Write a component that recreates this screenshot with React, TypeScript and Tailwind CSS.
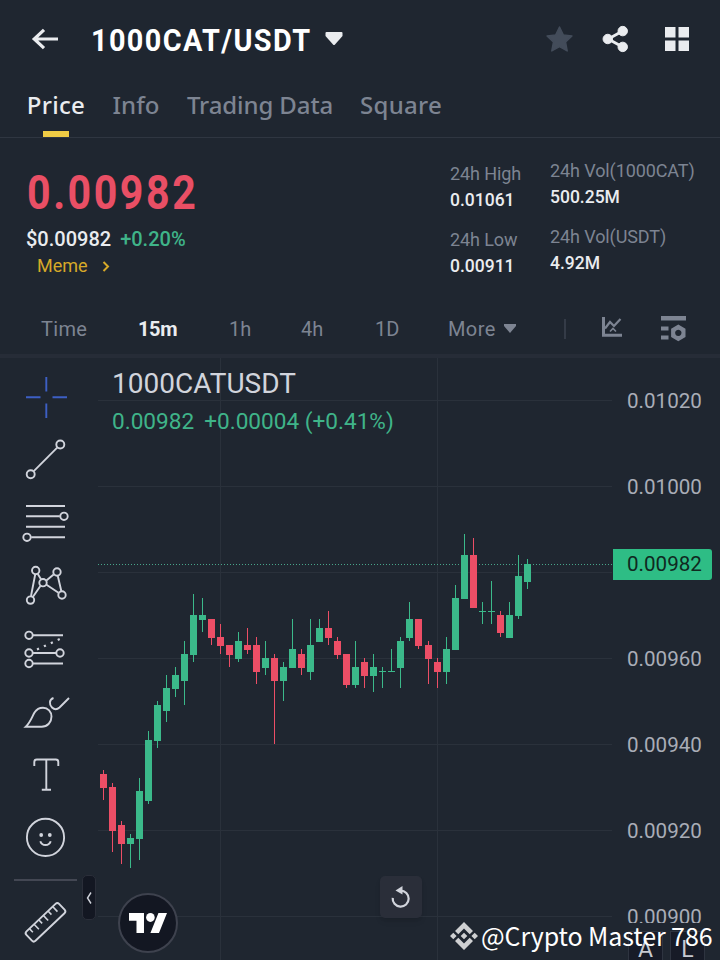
import React from "react";

type Candle = {
  up: boolean;
  high: number;
  top: number;
  bottom: number;
  low: number;
};

const c = (
  dir: "G" | "R",
  high: number,
  top: number,
  bottom: number,
  low: number
): Candle => ({ up: dir === "G", high, top, bottom, low });

// values are pane pixels + 358 (the pane's offset in the screen)
const PANE_TOP = 358;

const candles: Candle[] = [
  c("R", 770, 774, 788, 800),
  c("R", 783, 787, 831, 852),
  c("R", 821, 825, 844, 864),
  c("G", 834, 838, 844, 868),
  c("G", 778, 791, 839, 860),
  c("G", 731, 740, 801, 804),
  c("G", 701, 705, 741, 748),
  c("G", 675, 688, 711, 722),
  c("G", 667, 675, 689, 697),
  c("G", 641, 654, 681, 705),
  c("G", 594, 615, 655, 662),
  c("G", 598, 615, 620, 632),
  c("R", 619, 619, 638, 645),
  c("R", 624, 637, 646, 654),
  c("R", 645, 645, 655, 667),
  c("G", 632, 641, 659, 662),
  c("R", 628, 645, 650, 654),
  c("R", 637, 645, 672, 684),
  c("G", 641, 658, 668, 675),
  c("R", 654, 658, 681, 744),
  c("G", 662, 667, 681, 701),
  c("G", 619, 649, 668, 668),
  c("R", 649, 654, 668, 675),
  c("G", 619, 645, 672, 680),
  c("G", 619, 628, 642, 642),
  c("R", 611, 628, 638, 645),
  c("R", 637, 641, 655, 659),
  c("R", 654, 654, 685, 688),
  c("G", 641, 667, 685, 688),
  c("R", 658, 662, 676, 688),
  c("G", 654, 667, 676, 692),
  c("G", 667, 671, 672, 688),
  c("G", 649, 671, 672, 672),
  c("G", 637, 641, 668, 688),
  c("G", 602, 619, 638, 641),
  c("R", 619, 619, 646, 649),
  c("R", 641, 645, 659, 684),
  c("R", 658, 662, 672, 688),
  c("G", 637, 649, 672, 684),
  c("G", 585, 598, 650, 650),
  c("G", 534, 555, 599, 599),
  c("R", 538, 555, 608, 608),
  c("G", 602, 611, 612, 624),
  c("G", 581, 611, 612, 624),
  c("R", 611, 615, 633, 637),
  c("G", 602, 615, 638, 638),
  c("G", 555, 576, 616, 619),
  c("G", 559, 564, 582, 589),
];

const axisPrices = [
  "0.01020",
  "0.01000",
  "",
  "0.00960",
  "0.00940",
  "0.00920",
  "0.00900",
];

const tabs = [
  { label: "Price", cls: "w-[58px] text-[#eaecef] tracking-[0.3px]", active: true },
  { label: "Info", cls: "w-[48px] text-[#7d8492]" },
  { label: "Trading Data", cls: "w-[146px] text-[#7d8492] tracking-[-0.1px]" },
  { label: "Square", cls: "w-[82px] text-[#7d8492] tracking-[0.3px]" },
];

const Header = () => (
  <header className="flex h-[78px] items-center pl-[31px] pr-[31px]">
    <svg className="-mt-px" width="27" height="22" viewBox="0 0 27 22" fill="none" stroke="#eaecef" strokeWidth="3.2">
      <path d="M13 1.8 3.2 11 13 20.2M3 11h24" />
    </svg>
    <h1 className="ml-[33px] mt-[3px] w-[221px] whitespace-nowrap text-[31px] font-bold leading-none tracking-[1.5px] text-white">
      <span className="inline-block origin-left scale-x-[0.93]">1000CAT/USDT</span>
    </h1>
    <svg className="ml-[13px] -mt-px" width="18" height="13" viewBox="0 0 17 13" fill="#eaecef">
      <path d="M1 0h15q1 0 1 1v3L9.5 12.4q-1 1-2 0L0 4V1q0-1 1-1z" />
    </svg>
    <svg className="ml-auto" width="27" height="28" viewBox="0 0 28 28" fill="#434c5a" stroke="#434c5a" strokeWidth="1.5" strokeLinejoin="round">
      <path d="M14 1.5l3.9 8.2 9 1.2-6.6 6.3 1.7 9.2-8-4.4-8 4.4 1.7-9.2L1.1 10.900l9-1.2z" />
    </svg>
    <svg className="-mt-px ml-[29px]" width="27" height="28" viewBox="0 0 28 28" fill="#eaecef" stroke="#eaecef">
      <path d="M21 6 6.500 14 21 22" fill="none" strokeWidth="3" />
      <circle cx="21.500" cy="5.800" r="4.900" />
      <circle cx="6" cy="14" r="4.900" />
      <circle cx="21.500" cy="22.200" r="4.900" />
    </svg>
    <svg className="-mt-px ml-[36px]" width="24" height="24" viewBox="0 0 24 24" fill="#eaecef">
      <path d="M0 0h10.500v10.500H0zM13.500 0H24v10.500H13.500zM0 13.500h10.500V24H0zM13.500 13.500H24V24H13.500z" />
    </svg>
  </header>
);

const Tabs = () => (
  <nav className="flex h-[60px] gap-[27px] border-b border-[#2f3641] pl-[27px] font-['Noto_Sans'] text-[24px] font-medium">
    {tabs.map((t) => (
      <div key={t.label} className={`flex flex-col items-center justify-between whitespace-nowrap ${t.cls}`}>
        <span className="mt-[9px] leading-9">{t.label}</span>
        {t.active && <span className="h-[6px] w-[26px] bg-[#f0cc45]" />}
      </div>
    ))}
  </nav>
);

const Stat = ({ label, value }: { label: string; value: string }) => (
  <div className="h-[66px] whitespace-nowrap">
    <p className="text-[18px] leading-[26px] tracking-[-0.1px] text-[#7d8492]">{label}</p>
    <p className="text-[17.500px] font-medium leading-[26px] text-[#eaecef]">{value}</p>
  </div>
);

const Summary = () => (
  <section className="flex h-[165px] pl-[27px]">
    <div className="w-[423px] whitespace-nowrap pt-[30px]">
      <p className="w-[200px] origin-left scale-x-[0.84] text-[49px] font-bold leading-[50px] tracking-[3px] text-[#e94f65]">
        0.00982
      </p>
      <p className="-ml-px mt-[8px] flex gap-[9px] text-[20px] font-medium leading-[26px]">
        <span className="text-[#eaecef]">$0.00982</span>
        <span className="text-[#3fb489]">+0.20%</span>
      </p>
      <p className="flex items-center pl-[10px] text-[18px] leading-[28px] text-[#d6a928]">
        Meme
        <svg className="ml-[14px]" width="8" height="11" viewBox="0 0 8 11" fill="none" stroke="#d6a928" strokeWidth="2">
          <path d="M1.500 1 6 5.500 1.500 10" />
        </svg>
      </p>
    </div>
    <div className="w-[100px] pt-[23px]">
      <Stat label="24h High" value="0.01061" />
      <Stat label="24h Low" value="0.00911" />
    </div>
    <div className="pt-[20px]">
      <Stat label="24h Vol(1000CAT)" value="500.25M" />
      <Stat label="24h Vol(USDT)" value="4.92M" />
    </div>
  </section>
);

const Intervals = () => (
  <div className="flex h-[55px] items-center border-b-4 border-[#262c37] pl-[41px] text-[20px] text-[#7d8492]">
    <span className="w-[97px] tracking-[0.3px]">Time</span>
    <span className="w-[91px] font-bold tracking-[-0.4px] text-[#eaecef]">15m</span>
    <span className="w-[72px]">1h</span>
    <span className="w-[74px]">4h</span>
    <span className="w-[73px]">1D</span>
    <span className="w-[56px] tracking-[0.4px]">More</span>
    <svg width="12" height="9" viewBox="0 0 12 9" fill="#7d8492">
      <path d="M0 0h12v2L6 9 0 2z" />
    </svg>
    <span className="ml-[48px] h-5 w-[2px] bg-[#343b47]" />
    <svg className="-mt-[3px] ml-[36px]" width="20" height="20" viewBox="0 0 20 20" fill="none" stroke="#7d8492">
      <path d="M1.500 0v18.200H20" strokeWidth="3" />
      <path d="M3 11.500 8 5l4 4 6.500-7" strokeWidth="2.200" />
      <path d="M8 14.500l3-3 3 3" strokeWidth="1.600" />
    </svg>
    <svg className="ml-[39px]" width="26" height="26" viewBox="0 0 26 26" fill="#7d8492">
      <path d="M0 0h25v4.500H0zM0 10.500h7.500v4H0zM0 19.500h7.500v4H0z" />
      <path fillRule="evenodd" d="M17.300 8.500l7.200 4.200v8.400l-7.200 4.200-7.200-4.200v-8.400zM17.300 13.700a3.200 3.200 0 1 0 .01 0z" />
    </svg>
  </div>
);

const Tool = ({ children, color = "#d1d4dc" }: { children: React.ReactNode; color?: string }) => (
  <svg width="92" height="63" viewBox="0 0 92 63" fill="none" stroke={color} strokeWidth="1.900">
    {children}
  </svg>
);

const DrawingTools = () => (
  <aside className="flex w-[98px] shrink-0 flex-col pt-2">
    <Tool color="#3d5fc4">
      <path d="M46.300 11v14.500M46.300 37.500v14.500M26 31.300h14.500M52.500 31.300H67" />
    </Tool>
    <Tool>
      <path d="M33.800 42.200 57.200 18.600" />
      <circle cx="60.300" cy="15.500" r="4" />
      <circle cx="30.700" cy="45.300" r="4" />
    </Tool>
    <Tool>
      <path d="M26 14h39M26 24.300h33.800M26 34.700h39M31.200 45.300H65" />
      <circle cx="64" cy="24.300" r="3.700" />
      <circle cx="27" cy="45.300" r="3.700" />
    </Tool>
    <Tool>
      <path d="M35.200 19.500 31 41M37.800 19l3.200 5.200M40.400 31 33 41.800M46.400 25.500l7.200-6M57.800 21l3.500 15M46.500 29.800l12 8" />
      <circle cx="35.700" cy="15.500" r="3.700" />
      <circle cx="30.500" cy="45.100" r="3.700" />
      <circle cx="43" cy="27.700" r="3.700" />
      <circle cx="57" cy="17" r="3.700" />
      <circle cx="62" cy="40" r="3.700" />
    </Tool>
    <Tool>
      <path d="M33 17.300h30M33 35h23M33 45.500h30" />
      <path d="M37 31.500 61 20.500" strokeWidth="2.200" strokeDasharray="2.200 5.400" />
      <circle cx="29" cy="17.300" r="3.700" />
      <circle cx="29" cy="35" r="3.700" />
      <circle cx="60" cy="35" r="3.700" />
      <circle cx="29" cy="45.500" r="3.700" />
    </Tool>
    <Tool>
      <path d="M25.800 45.700C30 42 32 36 34.500 31.500 37 27.500 40 26.700 43 26.700c5 0 8.500 4 8.500 8.800 0 5.700-4 10.200-9.800 10.200z" />
      <path d="M53.500 17c-4.500 1.500-4.500 6.500-1.500 9.500 2.500 2.400 5 2.300 7.500 0L69 17" />
    </Tool>
    <Tool>
      <path d="M34.300 22v-4q0-2.500 2.500-2.500h19q2.500 0 2.500 2.500v4M46.300 15.500v30M41.800 45.700h9.200" />
    </Tool>
    <Tool>
      <circle cx="45.500" cy="30.400" r="18.600" />
      <circle cx="41.200" cy="28" r="1.900" fill="#d1d4dc" stroke="none" />
      <circle cx="49.800" cy="28" r="1.900" fill="#d1d4dc" stroke="none" />
      <path d="M40.300 34.200c1.500 5 8.900 5 10.400 0" />
    </Tool>
    <div className="ml-[14px] mt-[9px] h-[2px] w-[63px] bg-[#434753]" />
    <svg className="mt-[11px]" width="92" height="63" viewBox="0 0 92 63" fill="none" stroke="#d1d4dc" strokeWidth="1.900">
      <g transform="translate(45.500 30.300) rotate(-43.500)">
        <rect x="-22.500" y="-6.500" width="45" height="13" rx="2.500" />
        <path d="M-16-6.500v5M-9.600-6.500v7M-3.200-6.500v5M3.200-6.500v7M9.600-6.500v5M16-6.500v7" strokeWidth="1.600" />
      </g>
    </svg>
  </aside>
);

const CandleChart = () => (
  <svg className="shrink-0" width="514" height="602" viewBox="98 0 514 602" shapeRendering="crispEdges">
    {axisPrices.map((_, i) => (
      <rect key={i} x="98" y={42 + i * 86} width="514" height="1" fill="#2a313b" />
    ))}
    <rect x="220" y="0" width="1" height="602" fill="#2a313b" />
    <rect x="437" y="0" width="1" height="602" fill="#2a313b" />
    <path d="M98 206.500h514" stroke="#48a58a" strokeDasharray="1 2" />
    {candles.map((k, i) => {
      const x = 100 + i * 9 + (i >= 36 ? 1 : 0);
      const fill = k.up ? "#3bb98a" : "#ec4e66";
      return (
        <g key={i} fill={fill}>
          <rect x={x + 3} y={k.high - PANE_TOP} width="1" height={k.low - k.high} />
          <rect x={x} y={k.top - PANE_TOP} width="7" height={k.bottom - k.top} />
        </g>
      );
    })}
  </svg>
);

const PriceAxis = () => (
  <div className="relative flex-1 text-[20.600px] text-[#a9adb7]">
    {axisPrices.map((p, i) => (
      <div key={i} className="flex h-[86px] items-center pl-[15px]">
        {p}
      </div>
    ))}
    <div className="absolute left-[1px] top-[191px] flex h-[31px] w-[99px] items-center rounded-r-[3px] bg-[#2ebd85] pl-[14px] text-[#10291f]">
      0.00982
    </div>
    <div className="absolute left-0 top-[565px] flex h-[37px] w-[108px] gap-[7px] bg-[#1f2630] pl-[16px] pt-[8px] text-[23px] leading-[36px] text-[#c6c9d1]">
      <span className="h-[40px] w-[35px] border border-[#2e3440] bg-[#171b27] text-center">A</span>
      <span className="h-[40px] w-[35px] border border-[#2e3440] bg-[#171b27] text-center">L</span>
    </div>
  </div>
);

const Watermark = () => (
  <div className="absolute left-[450px] top-[562px] flex h-8 items-center whitespace-nowrap font-['Noto_Sans_CJK_SC',sans-serif] text-[25px] leading-8 tracking-[-0.1px] text-white">
    <svg className="mr-[3px]" width="28" height="28" viewBox="0 0 28 28" fill="#cfd0d2">
      <path d="M14 0l9 9-3.300 3.300L14 6.600l-5.700 5.700L5 9zM14 28l9-9-3.300-3.300-5.700 5.700-5.700-5.700L5 19zM14 10.700l3.300 3.300-3.300 3.300-3.300-3.300zM3.300 10.700 6.600 14l-3.300 3.300L0 14zM24.700 10.700 28 14l-3.300 3.300-3.300-3.300z" />
    </svg>
    <span className="-mt-[3px]">@Crypto Master 786</span>
  </div>
);

const Chart = () => (
  <main className="relative flex h-[602px] overflow-hidden">
    <DrawingTools />
    <CandleChart />
    <PriceAxis />

    <div className="absolute left-[112px] top-[10px] whitespace-nowrap">
      <p className="text-[28px] leading-8 text-[#d1d4dc]">1000CATUSDT</p>
      <p className="mt-2 flex gap-[10px] text-[22.600px] leading-7 text-[#3fb489]">
        <span>0.00982</span>
        <span>+0.00004 (+0.41%)</span>
      </p>
    </div>

    <button className="absolute left-[82px] top-[517px] flex h-[45px] w-[14px] items-center justify-center rounded-[5px] border border-[#2a2e39] bg-[#131722]">
      <svg width="6" height="12" viewBox="0 0 6 12" fill="none" stroke="#d1d4dc" strokeWidth="1.400">
        <path d="M5 .5 1.500 6 5 11.500" />
      </svg>
    </button>

    <div className="absolute left-[118px] top-[535px] flex size-[60px] items-center justify-center rounded-full border-2 border-[#3e424e] bg-[#131722]">
      <svg width="38" height="20" viewBox="0 4 35.500 18" fill="#fff" preserveAspectRatio="none">
        <path d="M14 22H7V11H0V4h14v18zM28 22h-8l7.500-18h8L28 22z" />
        <circle cx="20" cy="8" r="4" />
      </svg>
    </div>

    <button className="absolute left-[380px] top-[518px] flex size-[42px] items-center justify-center rounded-[5px] bg-[#2a2e39] shadow-md">
      <svg width="20" height="22" viewBox="0 0 20 22" fill="none" stroke="#d1d4dc" strokeWidth="2.200">
        <path d="M9.500 4.600a8 8 0 1 1-7.800 7.200" />
        <path d="M11.500 0v8.500L4.500 4.500z" fill="#d1d4dc" stroke="none" />
      </svg>
    </button>

    <Watermark />
  </main>
);

const App: React.FC = () => (
  <div className="h-[960px] w-[720px] overflow-hidden bg-[#1f2630] font-[Roboto,sans-serif]">
    <Header />
    <Tabs />
    <Summary />
    <Intervals />
    <Chart />
  </div>
);

export default App;
